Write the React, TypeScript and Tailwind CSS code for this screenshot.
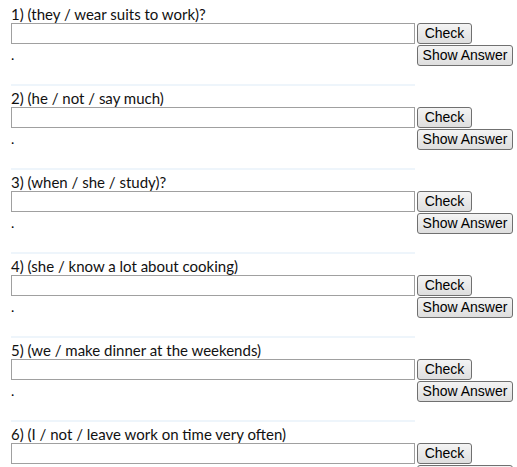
const items = [
  '1) (they / wear suits to work)?',
  '2) (he / not / say much)',
  '3) (when / she / study)?',
  '4) (she / know a lot about cooking)',
  '5) (we / make dinner at the weekends)',
  '6) (I / not / leave work on time very often)',
]

const btn =
  'block whitespace-nowrap rounded-[3px] border border-[#707070] bg-gradient-to-b from-[#f4f4f4] to-[#dedede] px-[4px] h-[21px] text-[14px] leading-[19px] text-black font-["Liberation_Sans",Arial,sans-serif]'

function Exercise({ label, last }: { label: string; last: boolean }) {
  return (
    <div className="h-[84px]">
      <div className="h-[22px] pt-[4px] text-[15px] leading-[18px] text-[#111] font-['Lato','Open_Sans',sans-serif]">
        {label}
      </div>
      <div className="flex">
        <div className="w-[404px]">
          <input
            type="text"
            className="block h-[21px] w-[404px] border border-[#a0a0a0] bg-white outline-none"
          />
          <div className="mt-[4px] h-[14px] text-[14px] leading-[14px] text-black font-['Lato',sans-serif]">.</div>
        </div>
        <div className="ml-[2px] flex flex-col gap-[1px]">
          <button type="button" className={btn + ' w-[55px]'}>
            Check
          </button>
          <button type="button" className={btn + ' w-[96px]'}>
            Show Answer
          </button>
        </div>
      </div>
      {!last && <div className="mt-[18px] h-[2px] w-[404px] bg-[#eef5fb]" />}
    </div>
  )
}

export default function App() {
  return (
    <div className="min-h-[467px] bg-white pl-[11px] pt-[1px]">
      {items.map((t, i) => (
        <Exercise key={t} label={t} last={i === items.length - 1} />
      ))}
    </div>
  )
}
